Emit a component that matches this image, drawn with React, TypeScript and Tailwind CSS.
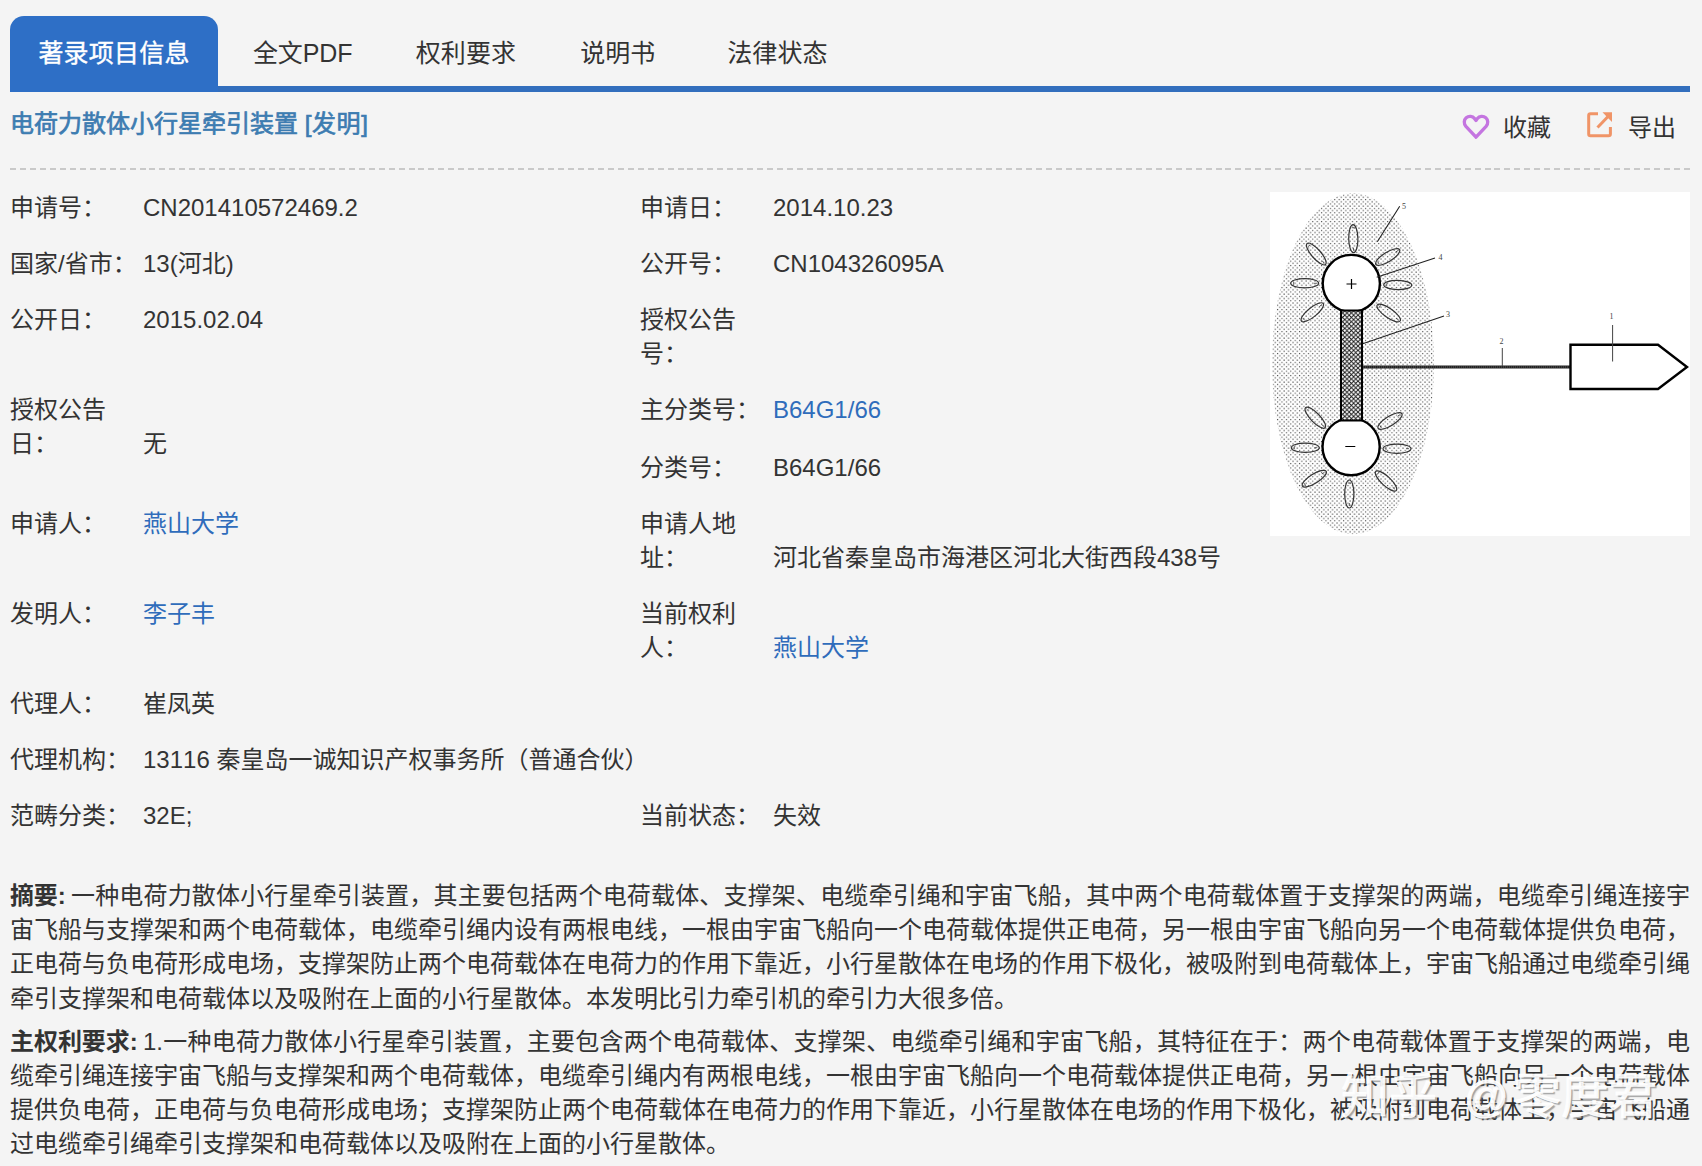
import React from 'react';

const tabs = [
  { id: 'pdf', label: '全文PDF', className: 'ml-[35px] tracking-[-0.15px]' },
  { id: 'claims', label: '权利要求', className: 'ml-[63.5px] tracking-[0.1px]' },
  { id: 'description', label: '说明书', className: 'ml-[64px]' },
  { id: 'legal', label: '法律状态', className: 'ml-[72px] tracking-[0.1px]' },
];

type Field = { label: string[]; value?: string; link?: boolean; height: string };

const leftFields: Field[] = [
  { label: ['申请号：'], value: 'CN201410572469.2', height: 'h-[56px]' },
  { label: ['国家/省市：'], value: '13(河北)', height: 'h-[56px]' },
  { label: ['公开日：'], value: '2015.02.04', height: 'h-[90px]' },
  { label: ['授权公告', '日：'], value: '无', height: 'h-[114px]' },
  { label: ['申请人：'], value: '燕山大学', link: true, height: 'h-[90px]' },
  { label: ['发明人：'], value: '李子丰', link: true, height: 'h-[90px]' },
  { label: ['代理人：'], value: '崔凤英', height: 'h-[56px]' },
  { label: ['代理机构：'], value: '13116 秦皇岛一诚知识产权事务所（普通合伙）', height: 'h-[56px]' },
  { label: ['范畴分类：'], value: '32E;', height: 'h-[56px]' },
];

const rightFields: Field[] = [
  { label: ['申请日：'], value: '2014.10.23', height: 'h-[56px]' },
  { label: ['公开号：'], value: 'CN104326095A', height: 'h-[56px]' },
  { label: ['授权公告', '号：'], height: 'h-[90px]' },
  { label: ['主分类号：'], value: 'B64G1/66', link: true, height: 'h-[58px]' },
  { label: ['分类号：'], value: 'B64G1/66', height: 'h-[56px]' },
  { label: ['申请人地', '址：'], value: '河北省秦皇岛市海港区河北大街西段438号', height: 'h-[90px]' },
  { label: ['当前权利', '人：'], value: '燕山大学', link: true, height: 'h-[202px]' },
  { label: ['当前状态：'], value: '失效', height: 'h-[56px]' },
];

const abstractLines = [
  '一种电荷力散体小行星牵引装置，其主要包括两个电荷载体、支撑架、电缆牵引绳和宇宙飞船，其中两个电荷载体置于支撑架的两端，电缆牵引绳连接宇',
  '宙飞船与支撑架和两个电荷载体，电缆牵引绳内设有两根电线，一根由宇宙飞船向一个电荷载体提供正电荷，另一根由宇宙飞船向另一个电荷载体提供负电荷，',
  '正电荷与负电荷形成电场，支撑架防止两个电荷载体在电荷力的作用下靠近，小行星散体在电场的作用下极化，被吸附到电荷载体上，宇宙飞船通过电缆牵引绳',
  '牵引支撑架和电荷载体以及吸附在上面的小行星散体。本发明比引力牵引机的牵引力大很多倍。',
];

const claimLines = [
  '1.一种电荷力散体小行星牵引装置，主要包含两个电荷载体、支撑架、电缆牵引绳和宇宙飞船，其特征在于：两个电荷载体置于支撑架的两端，电',
  '缆牵引绳连接宇宙飞船与支撑架和两个电荷载体，电缆牵引绳内有两根电线，一根由宇宙飞船向一个电荷载体提供正电荷，另一根由宇宙飞船向另一个电荷载体',
  '提供负电荷，正电荷与负电荷形成电场；支撑架防止两个电荷载体在电荷力的作用下靠近，小行星散体在电场的作用下极化，被吸附到电荷载体上，宇宙飞船通',
  '过电缆牵引绳牵引支撑架和电荷载体以及吸附在上面的小行星散体。',
];

// [cx, cy, rotation] of the polarised grains around both carriers
const grains = [
  [83.3, 46.7, 89],
  [46.3, 62, 49],
  [34.7, 91.3, 0],
  [42.3, 120.3, -39],
  [117.7, 65, -32],
  [127.7, 93, 1],
  [118.7, 121, 35],
  [45.3, 225.7, 46],
  [35.3, 255.7, 0],
  [44.3, 286.7, -32],
  [79.3, 302, 90],
  [116, 289, 43],
  [127, 256.7, 0],
  [120, 229, -32],
];

const FieldList = ({ fields }: { fields: Field[] }) => (
  <dl>
    {fields.map((field) => (
      <div key={field.label.join('')} className={`flex ${field.height}`}>
        <dt className="w-[133px] shrink-0 whitespace-nowrap">
          {field.label.map((line) => (
            <span key={line} className="block">{line}</span>
          ))}
        </dt>
        <dd className={`whitespace-nowrap ${field.label.length > 1 ? 'pt-[34px]' : ''} ${field.link ? 'text-[#2f6cbb]' : ''}`}>
          {field.value}
        </dd>
      </div>
    ))}
  </dl>
);

const Paragraph = ({ title, lines }: { title: string; lines: string[] }) => (
  <div>
    {lines.map((line, index) => (
      <p
        key={line}
        className={`whitespace-nowrap ${index < lines.length - 1 ? '[text-align-last:justify]' : ''}`}
      >
        {index === 0 && <b className="font-bold tracking-[-0.3px] [word-spacing:-1px]">{title} </b>}
        {line}
      </p>
    ))}
  </div>
);

const PatentFigure = () => (
  <svg width="420" height="344" viewBox="0 0 420 344" className="bg-white shrink-0" fill="none" stroke="#000">
    <defs>
      <pattern id="dots" width="4.4" height="4.4" patternUnits="userSpaceOnUse">
        <rect x="0.4" y="0.4" width="1.15" height="1.15" fill="#444" stroke="none" />
        <rect x="2.6" y="2.6" width="1.15" height="1.15" fill="#555" stroke="none" />
      </pattern>
      <pattern id="mesh" width="4.4" height="4.4" patternUnits="userSpaceOnUse">
        <path d="M0 0L4.4 4.4M4.4 0L0 4.4" stroke="#111" strokeWidth="0.9" />
      </pattern>
    </defs>

    <ellipse cx="83" cy="171.7" rx="81" ry="170.5" fill="url(#dots)" stroke="none" />

    {grains.map(([x, y, angle]) => (
      <g key={`${x}-${y}`} transform={`translate(${x} ${y}) rotate(${angle})`} stroke="#333">
        <ellipse rx="14" ry="4.6" strokeWidth="1.2" />
        <path d="M-11 -1.5V1.5M9 0H12" strokeWidth="0.8" />
      </g>
    ))}

    <circle cx="81.3" cy="91.5" r="28.6" fill="#fff" strokeWidth="2.4" />
    <circle cx="81.1" cy="254.7" r="28.6" fill="#fff" strokeWidth="2.4" />
    <rect x="71" y="118.5" width="21" height="110" fill="#fff" stroke="none" />
    <rect x="71" y="118.5" width="21" height="110" fill="url(#mesh)" strokeWidth="2" />
    <path d="M76.5 92H86.5M81.5 87V97M75.3 254.5H85.3" strokeWidth="1.2" />

    <path d="M93 175H300" stroke="#222" strokeWidth="2.8" />
    <path d="M93 175H300" stroke="#777" strokeWidth="0.7" strokeDasharray="1 1" />
    <path d="M300.5 152.7H388L417 175L388 197H300.5Z" strokeWidth="2.4" />

    <path d="M129.7 14.3L107.3 49.7M165 66L106.7 85.3M174 124L92.7 151.7" stroke="#222" strokeWidth="1.1" />
    <path d="M232.3 156V174M342.6 133V169.5" stroke="#444" strokeWidth="1" />

    <g className="font-['Liberation_Serif',serif] text-[8px]" fill="#444" stroke="none">
      <text x="132" y="17">5</text>
      <text x="168.5" y="67.5">4</text>
      <text x="176" y="125">3</text>
      <text x="229.5" y="152">2</text>
      <text x="339.5" y="127">1</text>
    </g>
  </svg>
);

const App: React.FC = () => {
  return (
    <div
      lang="zh-CN"
      className="relative w-full h-[1166px] overflow-hidden bg-[#f4f4f4] pl-[10px] pr-[12px] pt-[16px] text-[24px] leading-[34px] text-[#333] [font-kerning:none] font-['Liberation_Sans','Noto_Sans_CJK_SC',sans-serif]"
    >
      {/* Tabs */}
      <nav className="flex h-[76px] border-b-[6px] border-[#326ebd] text-[25px] leading-[74px]">
        <div className="w-[208px] h-[76px] shrink-0 rounded-t-[14px] bg-[#2e6fc6] text-center text-white tracking-[0.2px] [-webkit-text-stroke:0.4px_white]">
          著录项目信息
        </div>
        {tabs.map((tab) => (
          <div key={tab.id} className={`shrink-0 whitespace-nowrap ${tab.className}`}>{tab.label}</div>
        ))}
      </nav>

      {/* Title and actions */}
      <div className="flex h-[76px] justify-between">
        <h1 className="pt-[15px] text-[#3d7cb1] [-webkit-text-stroke:0.7px_#3d7cb1]">
          电荷力散体小行星牵引装置 <span className="tracking-[0.6px]">[发明]</span>
        </h1>
        <div className="flex pt-[18px] pr-[14px]">
          <svg width="28" height="28" viewBox="0 0 28 28" className="mt-[3px]" fill="none" stroke="#c475e0" strokeWidth="3.3" strokeLinejoin="round">
            <path d="M14 24.2L3.9 13.4C1.6 10.7 1.8 6.9 4.2 4.8C6.8 2.6 10.6 3.1 12.6 5.6L14 7.4L15.4 5.6C17.4 3.1 21.2 2.6 23.8 4.8C26.2 6.9 26.4 10.7 24.1 13.4Z" />
          </svg>
          <span className="ml-[13px] pt-px">收藏</span>
          <svg width="28" height="28" viewBox="0 0 28 28" className="ml-[35px] mt-px" fill="none" stroke="#f09467" strokeWidth="3">
            <path d="M12 2.7H4.5Q2.7 2.7 2.7 4.5V23Q2.7 24.8 4.5 24.8H22.5Q24.4 24.8 24.4 23V16" />
            <path d="M11.5 16.5L23 4.5" />
            <path d="M16.5 1.2H26V11L22.5 7.5L19.6 4.5Z" fill="#f09467" stroke="none" />
          </svg>
          <span className="ml-[14px] pt-px">导出</span>
        </div>
      </div>
      <div className="h-[2px] bg-[repeating-linear-gradient(90deg,#c9c9c9_0_6px,transparent_6px_9.963px)]" />

      {/* Bibliographic data */}
      <div className="flex h-[709px] pt-[22px]">
        <div className="w-[630px] shrink-0 -mt-[1px]">
          <FieldList fields={leftFields} />
        </div>
        <div className="w-[630px] shrink-0 -mt-[1px]">
          <FieldList fields={rightFields} />
        </div>
        <PatentFigure />
      </div>

      <div className="flex flex-col gap-[9px] leading-[34.2px]">
        <Paragraph title="摘要:" lines={abstractLines} />
        <Paragraph title="主权利要求:" lines={claimLines} />
      </div>

      {/* Watermark */}
      <div className="absolute left-[1341px] top-[1067px] flex whitespace-nowrap text-[48px] leading-[60px] text-white/90 [-webkit-text-stroke:1px_rgba(255,255,255,0.9)] [text-shadow:2px_2px_1px_rgba(110,110,110,0.6)]">
        <span>知乎</span>
        <span className="ml-[27px] w-[49px] text-[44px]">@</span>
        <span>零度君</span>
      </div>
    </div>
  );
};

export default App;
